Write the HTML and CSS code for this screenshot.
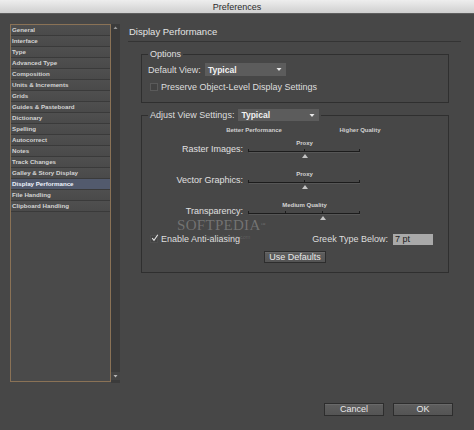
FILE: index.html
```html
<!DOCTYPE html>
<html lang="en">
<head>
    <meta charset="UTF-8">
    <title>Preferences</title>
    <link rel="stylesheet" href="styles.css">
</head>
<body>
    <div class="window">
        <div class="titlebar">Preferences</div>

        <div class="main">
            <div class="sidebar">
                <ul class="pref-list">
                    <li>General</li>
                    <li>Interface</li>
                    <li>Type</li>
                    <li>Advanced Type</li>
                    <li>Composition</li>
                    <li>Units &amp; Increments</li>
                    <li>Grids</li>
                    <li>Guides &amp; Pasteboard</li>
                    <li>Dictionary</li>
                    <li>Spelling</li>
                    <li>Autocorrect</li>
                    <li>Notes</li>
                    <li>Track Changes</li>
                    <li>Galley &amp; Story Display</li>
                    <li class="selected">Display Performance</li>
                    <li>File Handling</li>
                    <li>Clipboard Handling</li>
                </ul>
                <div class="scrollbar">
                    <svg width="9" height="8" viewBox="0 0 9 8"><path d="M2.5 5 L4.5 2.5 L6.5 5 Z" fill="#9a9a9a"/></svg>
                    <svg class="scroll-down" width="9" height="8" viewBox="0 0 9 8"><path d="M2.5 3 L4.5 5.5 L6.5 3 Z" fill="#b8b8b8"/></svg>
                </div>
            </div>

            <div class="panel">
                <h2 class="panel-title">Display Performance</h2>

                <fieldset class="group options">
                    <legend>Options</legend>
                    <div class="field-row">
                        <span class="label">Default View:</span>
                        <div class="select">
                            <span>Typical</span>
                            <svg width="6" height="5" viewBox="0 0 6 5"><path d="M0.5 1 L5.5 1 L3 4 Z" fill="#e8e8e8"/></svg>
                        </div>
                    </div>
                    <div class="check-row">
                        <span class="checkbox"></span>
                        <span>Preserve Object-Level Display Settings</span>
                    </div>
                </fieldset>

                <fieldset class="group adjust">
                    <legend>
                        <span class="label">Adjust View Settings:</span>
                        <div class="select small">
                            <span>Typical</span>
                            <svg width="6" height="5" viewBox="0 0 6 5"><path d="M0.5 1 L5.5 1 L3 4 Z" fill="#e8e8e8"/></svg>
                        </div>
                    </legend>

                    <div class="scale-head">
                        <span class="perf">Better Performance</span>
                        <span class="quality">Higher Quality</span>
                    </div>

                    <div class="slider-row">
                        <span class="slider-label">Raster Images:</span>
                        <div class="slider">
                            <div class="slider-value">Proxy</div>
                            <div class="track">
                                <span class="line"></span>
                                <span class="tick" style="left: 0%"></span>
                                <span class="tick" style="left: 50%"></span>
                                <span class="tick" style="left: 100%"></span>
                                <span class="thumb" style="left: 50%"></span>
                            </div>
                        </div>
                    </div>

                    <div class="slider-row">
                        <span class="slider-label">Vector Graphics:</span>
                        <div class="slider">
                            <div class="slider-value">Proxy</div>
                            <div class="track">
                                <span class="line"></span>
                                <span class="tick" style="left: 0%"></span>
                                <span class="tick" style="left: 50%"></span>
                                <span class="tick" style="left: 100%"></span>
                                <span class="thumb" style="left: 50%"></span>
                            </div>
                        </div>
                    </div>

                    <div class="slider-row">
                        <span class="slider-label">Transparency:</span>
                        <div class="slider">
                            <div class="slider-value">Medium Quality</div>
                            <div class="track">
                                <span class="line"></span>
                                <span class="tick" style="left: 0%"></span>
                                <span class="tick" style="left: 33.33%"></span>
                                <span class="tick" style="left: 66.67%"></span>
                                <span class="tick" style="left: 100%"></span>
                                <span class="thumb" style="left: 66.67%"></span>
                            </div>
                        </div>
                    </div>

                    <div class="aa-row">
                        <div class="check-row inline">
                            <span class="checkbox checked">
                                <svg width="8" height="8" viewBox="0 0 8 8"><path d="M1.2 4.2 L3 6.3 L6.8 0.8" fill="none" stroke="#e4e4e4" stroke-width="1.1"/></svg>
                            </span>
                            <span>Enable Anti-aliasing</span>
                        </div>
                        <div class="greek">
                            <span>Greek Type Below:</span>
                            <div class="text-input">7 pt</div>
                        </div>
                    </div>

                    <button class="btn defaults">Use Defaults</button>
                </fieldset>
            </div>
        </div>

        <div class="footer">
            <button class="btn">Cancel</button>
            <button class="btn">OK</button>
        </div>

        <div class="watermark">SOFTPEDIA<sup>™</sup><small>www.softpedia.com</small></div>
    </div>
</body>
</html>
```

FILE: styles.css
```css
body {
    margin: 0;
    padding: 0;
    background-color: #474747;
    font-family: "Liberation Sans", Arial, sans-serif;
    color: #dadada;
}

.window {
    position: relative;
    width: 474px;
    height: 430px;
    overflow: hidden;
    display: flex;
    flex-direction: column;
}

.titlebar {
    height: 14px;
    line-height: 14px;
    box-sizing: border-box;
    text-align: center;
    font-size: 9px;
    color: #2c2c2c;
    background: linear-gradient(#eeeeee, #cfcfcf);
    border-bottom: 1px solid #5e5e5e;
}

.main {
    display: flex;
    padding: 10px 0 0 10px;
}

/* lista de la izquierda */
.sidebar {
    display: flex;
    height: 359px;
}

.pref-list {
    list-style: none;
    margin: 0;
    padding: 0;
    width: 99px;
    height: 356px;
    border: 1px solid #8a7256;
    background: #4a4a4a;
}

.pref-list li {
    height: 10px;
    line-height: 10px;
    padding-left: 1px;
    border-bottom: 1px solid #3a3a3a;
    background: linear-gradient(#4f4f4f, #4a4a4a);
    font-size: 6.2px;
    font-weight: bold;
    color: #d4d4d4;
    white-space: nowrap;
}

.pref-list li.selected {
    background: #525a6d;
    color: #eef2fb;
}

.scrollbar {
    width: 9px;
    height: 359px;
    background: #3b3b3b;
    display: flex;
    flex-direction: column;
    justify-content: space-between;
}

.scrollbar svg {
    display: block;
}

.scroll-down {
    margin-bottom: 3px;
    background: #444;
}

/* panel derecho */
.panel {
    width: 333px;
    margin-left: 8px;
}

.panel-title {
    margin: 2px 0 0;
    padding: 0 0 3px 1px;
    font-size: 9.5px;
    font-weight: normal;
    line-height: 12px;
    color: #e4e4e4;
    border-bottom: 1px solid #343434;
}

.group {
    margin: 7px 12px 0 13px;
    padding: 0;
    border: 1px solid #2f2f2f;
    min-width: 0;
}

.group legend {
    margin-left: 6px;
    padding: 0 2px;
    font-size: 9px;
    line-height: 11px;
    color: #e0e0e0;
}

.options {
    padding: 3px 0 10px;
}

.adjust {
    margin-top: 6px;
    padding: 4px 0 9px;
}

.adjust legend {
    display: flex;
    align-items: center;
    gap: 4px;
}

.label {
    font-size: 9px;
    color: #dedede;
}

.field-row {
    display: flex;
    align-items: center;
    gap: 4px;
    padding-left: 6px;
}

.select {
    width: 81px;
    height: 13px;
    box-sizing: border-box;
    padding: 0 4px 0 3px;
    display: flex;
    align-items: center;
    justify-content: space-between;
    background: #5c5c5c;
    font-size: 8.5px;
    font-weight: bold;
    color: #f2f2f2;
}

.select.small {
    height: 12px;
}

.check-row {
    display: flex;
    align-items: center;
    gap: 3px;
    height: 10px;
    margin-top: 6px;
    padding-left: 8px;
    font-size: 9px;
    color: #dedede;
}

.check-row.inline {
    margin-top: 0;
    padding-left: 0;
}

.checkbox {
    width: 6px;
    height: 6px;
    background: #424242;
    border: 1px solid #5a5a5a;
    position: relative;
}

.checkbox.checked {
    border-color: #4e4e4e;
}

.checkbox svg {
    position: absolute;
    left: 0;
    top: -2px;
}

/* sliders */
.scale-head {
    display: flex;
    gap: 36px;
    padding-left: 72px;
    font-size: 6px;
    font-weight: bold;
    line-height: 10px;
    color: #d0d0d0;
}

.scale-head .perf {
    width: 80px;
    text-align: center;
}

.scale-head .quality {
    width: 60px;
    text-align: center;
}

.slider-row {
    display: grid;
    grid-template-columns: 101px 111px;
    column-gap: 6px;
    margin-top: 10px;
}

.scale-head + .slider-row {
    margin-top: 4px;
}

.slider-label {
    align-self: end;
    margin-bottom: 5px;
    text-align: right;
    font-size: 9px;
    line-height: 11px;
    color: #e0e0e0;
}

.slider-value {
    height: 9px;
    line-height: 9px;
    text-align: center;
    font-size: 6px;
    font-weight: bold;
    color: #d4d4d4;
}

.track {
    position: relative;
    height: 12px;
}

.track .line {
    position: absolute;
    left: 0;
    right: 0;
    top: 3px;
    height: 1px;
    background: #1c1c1c;
    box-shadow: 0 1px 0 #565656;
}

.track .tick {
    position: absolute;
    top: 1px;
    width: 1px;
    height: 3px;
    margin-left: -1px;
    background: #1c1c1c;
}

.track .thumb {
    position: absolute;
    top: 6px;
    margin-left: -3px;
    width: 0;
    height: 0;
    border-left: 3px solid transparent;
    border-right: 3px solid transparent;
    border-bottom: 4px solid #c4c4c4;
}

.aa-row {
    display: flex;
    align-items: center;
    justify-content: space-between;
    height: 12px;
    margin-top: 11px;
    padding: 0 15px 0 8px;
}

.greek {
    display: flex;
    align-items: center;
    gap: 5px;
    font-size: 9px;
    color: #dedede;
}

.text-input {
    width: 40px;
    height: 11px;
    box-sizing: border-box;
    padding-left: 2px;
    line-height: 11px;
    background: #a9a9a9;
    color: #1c1c1c;
    font-size: 9px;
}

/* botones */
.btn {
    display: block;
    width: 60px;
    height: 13px;
    padding: 0;
    background: linear-gradient(#5e5e5e, #545454);
    border: 1px solid #2d2d2d;
    box-shadow: inset 0 1px 0 #696969;
    font-family: "Liberation Sans", Arial, sans-serif;
    font-size: 9px;
    line-height: 11px;
    color: #e8e8e8;
}

.btn.defaults {
    width: 62px;
    height: 12px;
    line-height: 10px;
    margin: 6px auto 0;
}

.footer {
    display: flex;
    justify-content: flex-end;
    gap: 9px;
    padding: 20px 21px 0 0;
}

/* marca de agua */
.watermark {
    position: absolute;
    left: 177px;
    top: 217px;
    font-family: "Liberation Serif", "Times New Roman", serif;
    font-size: 15px;
    line-height: 16px;
    letter-spacing: 0.3px;
    color: rgba(210, 210, 210, 0.32);
    pointer-events: none;
}

.watermark sup {
    font-size: 5px;
    vertical-align: top;
}

.watermark small {
    display: block;
    margin: 1px 0 0 26px;
    font-family: "Liberation Sans", Arial, sans-serif;
    font-size: 5.5px;
    line-height: 6px;
    letter-spacing: 0;
    color: rgba(210, 210, 210, 0.18);
}
```
